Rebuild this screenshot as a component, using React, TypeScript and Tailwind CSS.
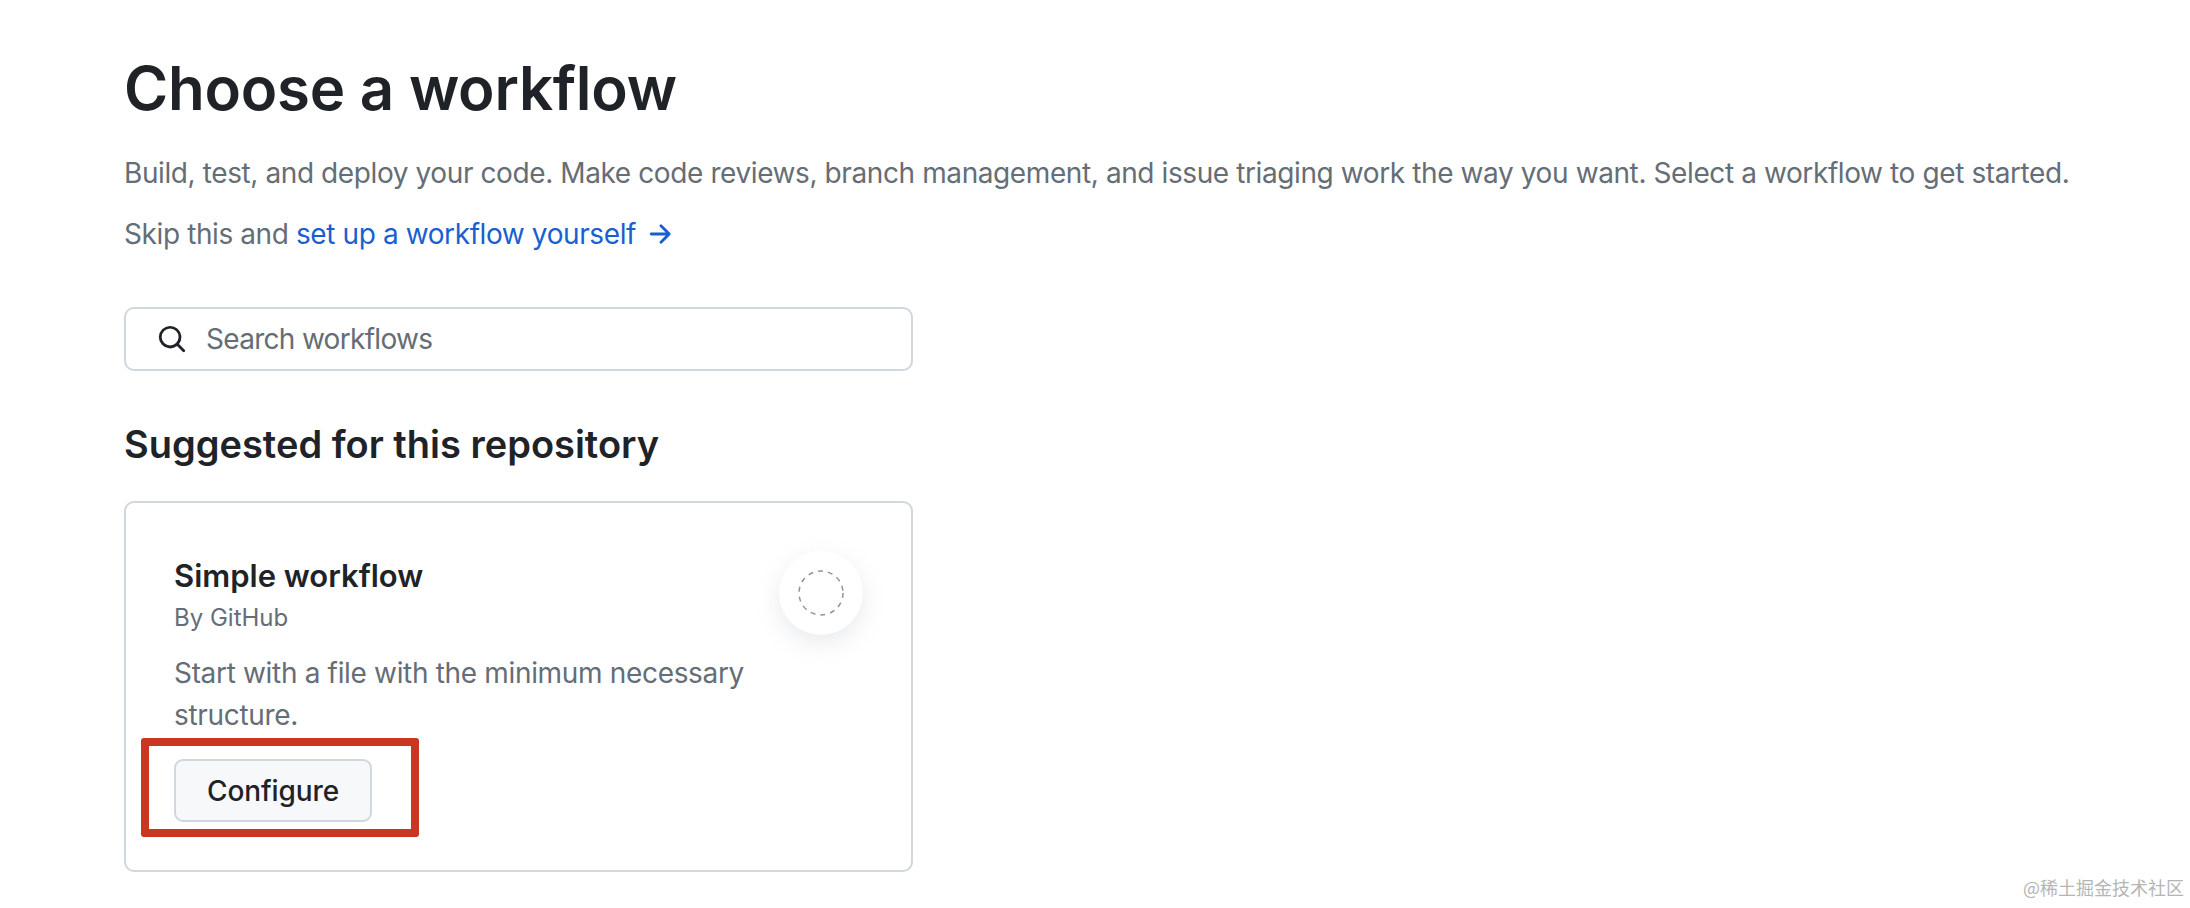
function SearchIcon() {
    return (
        <svg width="30" height="30" viewBox="0 0 16 16" fill="#1f2328" className="shrink-0">
            <path d="M10.68 11.74a6 6 0 0 1-7.922-8.982 6 6 0 0 1 8.982 7.922l3.04 3.04a.749.749 0 0 1-.326 1.275.749.749 0 0 1-.734-.215ZM11.5 7a4.499 4.499 0 1 0-8.997 0A4.499 4.499 0 0 0 11.5 7Z" />
        </svg>
    );
}

function ArrowIcon() {
    return (
        <svg width="31" height="31" viewBox="0 0 16 16" fill="#1a5fd0" className="ml-[8px] inline-block align-[-6px]">
            <path d="M8.22 2.97a.75.75 0 0 1 1.06 0l4.25 4.25a.75.75 0 0 1 0 1.06l-4.25 4.25a.751.751 0 0 1-1.042-.018.751.751 0 0 1-.018-1.042l2.97-2.97H3.75a.75.75 0 0 1 0-1.5h7.44L8.22 4.03a.75.75 0 0 1 0-1.06Z" />
        </svg>
    );
}

function WorkflowCard() {
    return (
        <div className="flex h-[371px] w-[789px] flex-col rounded-[10px] border-2 border-[#d0d7de] bg-white pt-[54px] pl-[48px]">
            <div className="flex items-start justify-between pr-[48px]">
                <div>
                    <h3 className="text-[31px] leading-[38px] font-semibold text-[#1f2328]">Simple workflow</h3>
                    <p className="mt-[6px] text-[24px] leading-[34px] text-[#656d76]">By GitHub</p>
                </div>
                <div className="mt-[-6px] flex h-[84px] w-[84px] items-center justify-center rounded-full bg-white shadow-[0_8px_24px_rgba(140,149,159,0.2)]">
                    <svg width="48" height="48" viewBox="0 0 48 48" fill="none">
                        <circle cx="24" cy="24" r="22" stroke="#8c959f" strokeWidth="1.5" strokeDasharray="5 5" />
                    </svg>
                </div>
            </div>
            <p className="mt-[17px] w-[620px] text-[28px] leading-[42px] tracking-[-0.33px] text-[#656d76]">
                Start with a file with the minimum necessary structure.
            </p>
            <div className="relative mt-[23px] self-start">
                <button
                    type="button"
                    className="h-[63px] w-[198px] rounded-[9px] border-2 border-[#d0d7de] bg-[#f6f8fa] text-[28px] font-medium tracking-[-0.1px] text-[#1f2328]"
                >
                    Configure
                </button>
                <div className="absolute top-[-21px] left-[-33px] h-[99px] w-[278px] rounded-[3px] border-[8px] border-[#c93622]" />
            </div>
        </div>
    );
}

export default function App() {
    return (
        <div className="relative h-[908px] w-[2190px] overflow-hidden bg-white pt-[47px] pl-[124px] font-['Inter',sans-serif]">
            <h1 className="text-[60px] leading-[82px] font-semibold tracking-[-0.25px] text-[#1f2328]">Choose a workflow</h1>
            <p className="mt-[24px] text-[28px] leading-[40px] tracking-[-0.4px] text-[#656d76]">
                Build, test, and deploy your code. Make code reviews, branch management, and issue triaging work the way you want. Select a workflow to get started.
            </p>
            <p className="mt-[21px] text-[28px] leading-[40px] tracking-[-0.4px] text-[#656d76]">
                Skip this and <a className="text-[#1a5fd0]">set up a workflow yourself</a>
                <ArrowIcon />
            </p>
            <div className="mt-[53px] flex h-[64px] w-[789px] items-center gap-[19px] rounded-[10px] border-2 border-[#d0d7de] bg-white pl-[31px]">
                <SearchIcon />
                <span className="text-[28px] tracking-[-0.7px] text-[#656d76]">Search workflows</span>
            </div>
            <h2 className="mt-[49px] text-[38px] leading-[48px] font-semibold text-[#1f2328]">Suggested for this repository</h2>
            <div className="mt-[33px]">
                <WorkflowCard />
            </div>
            <div className="absolute right-[6px] bottom-[7px] font-['Noto_Sans_CJK_SC',sans-serif] text-[18px] text-[#b5b5b5]">
                @稀土掘金技术社区
            </div>
        </div>
    );
}
